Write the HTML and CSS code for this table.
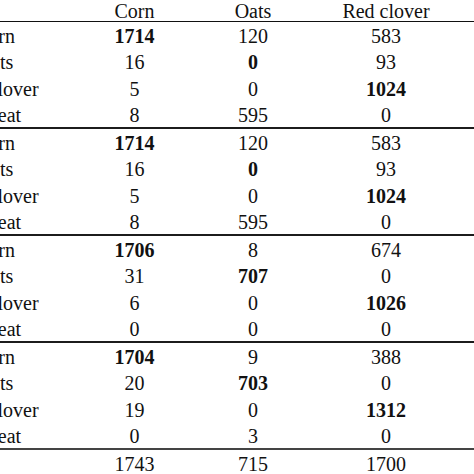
FILE: index.html
```html
<!DOCTYPE html>
<html>
<head>
<meta charset="utf-8">
<link rel="stylesheet" href="styles.css">
</head>
<body>
<table class="matrix">
  <colgroup>
    <col class="c-label">
    <col class="c-corn">
    <col class="c-oats">
    <col class="c-clover">
  </colgroup>
  <thead>
    <tr><th></th><th>Corn</th><th>Oats</th><th>Red clover</th></tr>
  </thead>
  <tbody>
    <tr><td>Corn</td><td><b>1714</b></td><td>120</td><td>583</td></tr>
    <tr><td>Oats</td><td>16</td><td><b>0</b></td><td>93</td></tr>
    <tr><td>Red clover</td><td>5</td><td>0</td><td><b>1024</b></td></tr>
    <tr><td>Wheat</td><td>8</td><td>595</td><td>0</td></tr>
  </tbody>
  <tbody>
    <tr><td>Corn</td><td><b>1714</b></td><td>120</td><td>583</td></tr>
    <tr><td>Oats</td><td>16</td><td><b>0</b></td><td>93</td></tr>
    <tr><td>Red clover</td><td>5</td><td>0</td><td><b>1024</b></td></tr>
    <tr><td>Wheat</td><td>8</td><td>595</td><td>0</td></tr>
  </tbody>
  <tbody>
    <tr><td>Corn</td><td><b>1706</b></td><td>8</td><td>674</td></tr>
    <tr><td>Oats</td><td>31</td><td><b>707</b></td><td>0</td></tr>
    <tr><td>Red clover</td><td>6</td><td>0</td><td><b>1026</b></td></tr>
    <tr><td>Wheat</td><td>0</td><td>0</td><td>0</td></tr>
  </tbody>
  <tbody class="last">
    <tr><td>Corn</td><td><b>1704</b></td><td>9</td><td>388</td></tr>
    <tr><td>Oats</td><td>20</td><td><b>703</b></td><td>0</td></tr>
    <tr><td>Red clover</td><td>19</td><td>0</td><td><b>1312</b></td></tr>
    <tr><td>Wheat</td><td>0</td><td>3</td><td>0</td></tr>
  </tbody>
  <tfoot>
    <tr><td></td><td>1743</td><td>715</td><td>1700</td></tr>
  </tfoot>
</table>
</body>
</html>
```

FILE: styles.css
```css
html, body {
  margin: 0;
  padding: 0;
  background: #ffffff;
  overflow: hidden;
}

.matrix {
  font-family: "Liberation Serif", "Times New Roman", serif;
  font-size: 20px;
  color: #111111;
  border-collapse: collapse;
  table-layout: fixed;
  width: 545px;
  margin-left: -65px;
  margin-top: -4px;
}

.c-label { width: 120px; }
.c-corn { width: 159px; }
.c-oats { width: 78px; }
.c-clover { width: 188px; }

.matrix th,
.matrix td {
  padding: 2px 0 0 0;
  height: 24.25px;
  line-height: 24px;
  text-align: center;
  font-weight: normal;
  white-space: nowrap;
}

.matrix thead th {
  padding: 5px 0 0 0;
  height: 18px;
  line-height: 20px;
}

.matrix b {
  font-weight: bold;
}

.matrix thead tr {
  border-bottom: 1.5px solid #111;
}

.matrix tbody {
  border-bottom: 2px solid #1c1c1c;
}

.matrix tbody.last {
  border-bottom: 2px solid #444;
}
```
